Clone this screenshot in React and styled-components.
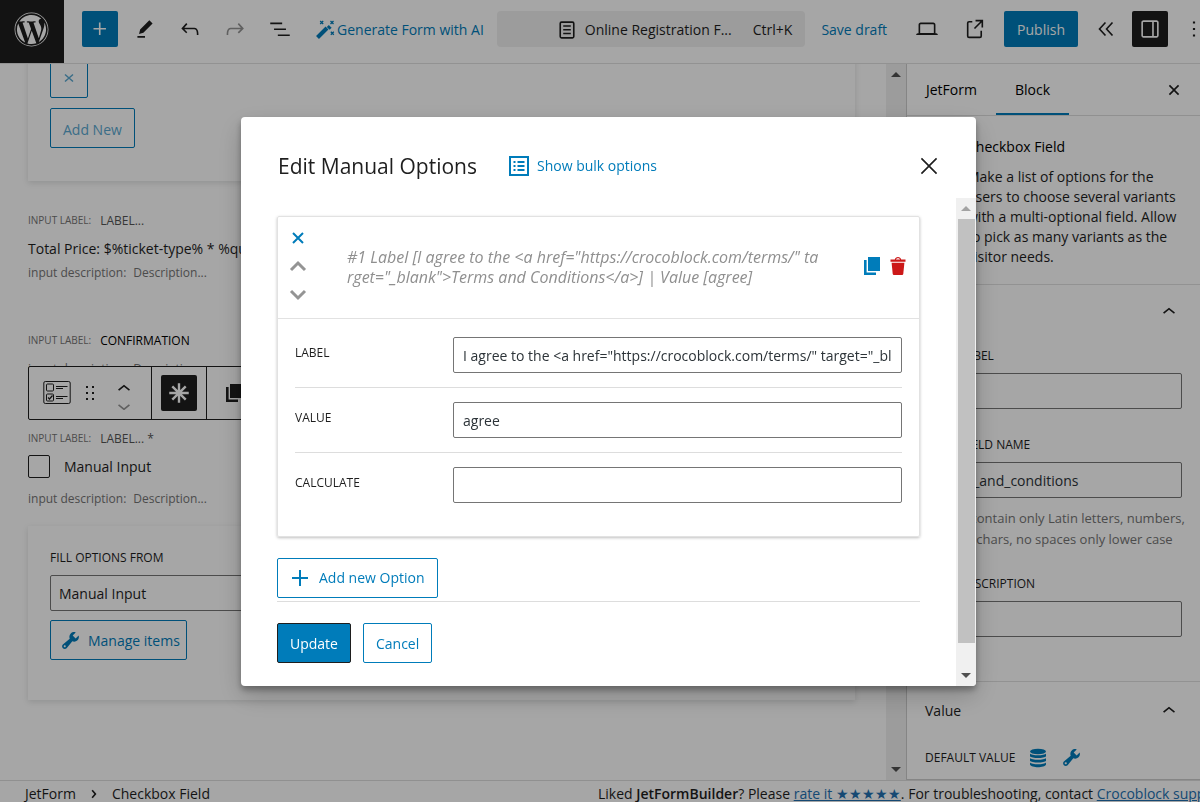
import React from "react";
import styled, { createGlobalStyle, css } from "styled-components";
import { FaWordpress } from "react-icons/fa";

const GlobalStyle = createGlobalStyle`
  * {
    box-sizing: border-box;
  }
  body {
    margin: 0;
    overflow: hidden;
    background: #fff;
    color: #1e1e1e;
    font-family: "Open Sans", "Noto Sans", sans-serif;
    font-size: 14px;
  }
  button,
  input,
  select {
    font: inherit;
    color: inherit;
  }
  button {
    cursor: pointer;
  }
`;

const BLUE = "#007cba";

const Viewport = styled.div`
  height: 100vh;
  overflow: hidden;
`;

const Page = styled.div`
  display: flex;
  flex-direction: column;
  width: calc(100% + 17px);
  height: 100%;
`;

const Svg = styled.svg`
  display: block;
  flex: none;
  fill: ${(p) => (p.$line ? "none" : "currentColor")};
  stroke: ${(p) => (p.$line ? "currentColor" : "none")};
`;

const Icon = ({ d, size = 26, box = 24, line, children }) => (
  <Svg
    width={size}
    height={size}
    viewBox={`0 0 ${box} ${box}`}
    $line={line}
    strokeWidth={line}
    fillRule="evenodd"
    aria-hidden="true"
  >
    {d ? <path d={d} /> : children}
  </Svg>
);

const icons = {
  plus: "M11 12.5V17.5H12.5V12.5H17.5V11H12.5V6H11V11H6V12.5H11Z",
  edit: "m19 7-3-3-8.5 8.5-1 4 4-1L19 7Zm-7 11.5H5V20h7v-1.5Z",
  undo: "M18.3 11.7c-.6-.6-1.4-.9-2.3-.9H6.7l2.9-3.3-1.1-1-4.5 5L8.5 16l1-1-2.7-2.7H16c.5 0 .9.2 1.3.5 1 1 1 3.4 1 4.5v.3h1.5v-.2c0-1.5 0-4.3-1.5-5.7z",
  redo: "M15.6 6.5l-1.1 1 2.9 3.3H8c-.9 0-1.7.3-2.3.9-1.4 1.5-1.4 4.2-1.4 5.6v.2h1.5v-.3c0-1.1 0-3.5 1-4.5.3-.3.7-.5 1.3-.5h9.2L14.5 15l1.1 1.1 4.6-4.6-4.6-5z",
  list: "M3 6h11v1.5H3V6Zm3.5 5.5h11V13h-11v-1.5ZM21 17H10v1.5h11V17Z",
  page: "M15.5 7.5h-7V9h7V7.5Zm-7 3.5h7v1.5h-7V11Zm7 3.5h-7V16h7v-1.5ZM17 4H7a2 2 0 0 0-2 2v12a2 2 0 0 0 2 2h10a2 2 0 0 0 2-2V6a2 2 0 0 0-2-2ZM7 5.5h10a.5.5 0 0 1 .5.5v12a.5.5 0 0 1-.5.5H7a.5.5 0 0 1-.5-.5V6a.5.5 0 0 1 .5-.5Z",
  desktop:
    "M20.5 16h-.7V8c0-1.1-.9-2-2-2H6.2c-1.1 0-2 .9-2 2v8h-.7c-.8 0-1.5.7-1.5 1.5h20c0-.8-.7-1.5-1.5-1.5zM5.7 8c0-.3.2-.5.5-.5h11.6c.3 0 .5.2.5.5v7.6H5.7V8z",
  external:
    "M19.5 3.5h-7V5h4.44l-5.97 5.97 1.06 1.06L18 6.06v4.44h1.5v-7Zm-13 1a2 2 0 0 0-2 2v12a2 2 0 0 0 2 2h10a2 2 0 0 0 2-2v-5H17v5a.5.5 0 0 1-.5.5h-10a.5.5 0 0 1-.5-.5v-12a.5.5 0 0 1 .5-.5h3V4.5h-3Z",
  drawer:
    "M18 4H6c-1.1 0-2 .9-2 2v12c0 1.1.9 2 2 2h12c1.1 0 2-.9 2-2V6c0-1.1-.9-2-2-2zm-4 14.5H6c-.3 0-.5-.2-.5-.5V6c0-.3.2-.5.5-.5h8v13zm4.5-.5c0 .3-.2.5-.5.5h-2.5v-13H18c.3 0 .5.2.5.5v12z",
  more: "M13 19h-2v-2h2v2zm0-6h-2v-2h2v2zm0-6h-2V5h2v2z",
  closeSmall:
    "M12 13.06l3.712 3.713 1.061-1.06L13.061 12l3.712-3.712-1.06-1.06L12 10.938 8.288 7.227l-1.061 1.06L10.939 12l-3.712 3.712 1.06 1.061L12 13.061z",
  close:
    "m13.06 12 6.47-6.47-1.06-1.06L12 10.94 5.53 4.47 4.47 5.53 10.94 12l-6.47 6.47 1.06 1.06L12 13.06l6.47 6.47 1.06-1.06L13.06 12Z",
  up: "M6.5 12.4L12 8l5.5 4.4-.9 1.2L12 10l-4.5 3.6-1-1.2z",
  down: "M17.5 11.6L12 16l-5.5-4.4.9-1.2L12 14l4.5-3.6 1 1.2z",
  next: "M10.8622 8.04053L14.2805 12.0286L10.8622 16.0167L9.72327 15.0405L12.3049 12.0286L9.72327 9.01672L10.8622 8.04053Z",
  drag: "M8 7h2V5H8v2zm0 6h2v-2H8v2zm0 6h2v-2H8v2zm6-14v2h2V5h-2zm0 8h2v-2h-2v2zm0 6h2v-2h-2v2z",
  wrench:
    "M16.68 9.77c-1.34 1.34-3.3 1.67-4.95.99l-5.41 6.52c-.99.99-2.59.99-3.58 0s-.99-2.59 0-3.57l6.52-5.42c-.68-1.65-.35-3.61.99-4.95 1.28-1.28 3.12-1.62 4.72-1.06l-2.89 2.89 2.82 2.82 2.86-2.87c.53 1.58.18 3.39-1.08 4.65zM3.81 16.21c.4.39 1.04.39 1.43 0 .4-.4.4-1.04 0-1.43-.39-.4-1.03-.4-1.43 0-.39.39-.39 1.03 0 1.43z",
  copy: "M6 1h12v14H6zM2 4h2.6v12.4H14V19H2z",
};

const Wand = () => (
  <Icon size={20} box={20} line={1.3}>
    <path d="M1.5 17.5 L11 8" strokeWidth="4" />
    <path d="M12.2 8.4 L14.2 6.4" strokeWidth="4" />
    <path d="M4.2 1l3 3m0-3l-3 3M14.5 1l3 3m0-3l-3 3M14.8 11.8l3 3m0-3l-3 3" />
  </Icon>
);

const Trash = () => (
  <Icon size={20} box={20}>
    <path d="M2.5 3.500h4.300c.3-1.500 1.600-2.500 3.200-2.500s2.900 1 3.200 2.500h4.300v2.200h-15zM8 3.500h4c-.3-.8-1-1.300-2-1.300s-1.700.5-2 1.300z" />
    <path d="M3.600 6.700h12.800l-1.100 11c-.1 .8-.7 1.300-1.500 1.300h-7.600c-.8 0-1.400-.5-1.500-1.300z" />
  </Icon>
);

const Database = () => (
  <Icon size={20} box={20}>
    <ellipse cx="10" cy="3.500" rx="8" ry="2.800" />
    <path d="M2 5.500c1.500 2.400 14.500 2.400 16 0v2.700c-1.500 2.400-14.500 2.400-16 0z" />
    <path d="M2 10c1.500 2.400 14.500 2.400 16 0v2.700c-1.500 2.400-14.500 2.400-16 0z" />
    <path d="M2 14.500c1.500 2.400 14.500 2.400 16 0v2c-1.500 3.600-14.500 3.600-16 0z" />
  </Icon>
);

const BulkIcon = () => (
  <Icon size={22} box={22} line={2}>
    <rect x="2" y="2" width="18" height="18" />
    <path d="M5.500 7h2M9.500 7h7M5.500 11h2M9.500 11h7M5.500 15h2M9.500 15h7" />
  </Icon>
);

const CheckboxBlockIcon = () => (
  <Icon size={28} box={28} line={1}>
    <rect x=".8" y="2.500" width="26.400" height="22" rx="1.500" />
    <rect x="3.500" y="5" width="7" height="7" rx="1" />
    <rect x="3.500" y="15" width="7" height="7" rx="1" />
    <path d="M13 7.500h11.500M13 9.500h7M13 17.500h11.500M13 19.500h7M5 18.500l1.500 1.500 3-3.500" strokeWidth="1.200" />
  </Icon>
);

/* ---------- top bar ---------- */

const TopBar = styled.header`
  display: flex;
  align-items: center;
  flex: none;
  height: 64px;
  border-bottom: 1px solid #e0e0e0;
`;

const Logo = styled.a`
  display: grid;
  place-items: center;
  align-self: stretch;
  width: 64px;
  padding: 0 2px 4px 0;
  margin-right: 18px;
  background: #1e1e1e;
  color: #fff;
`;

const Tools = styled.div`
  display: flex;
  align-items: center;
  gap: 9px;
  padding-bottom: 6px;
`;

const IconButton = styled.button`
  display: grid;
  place-items: center;
  flex: none;
  width: 36px;
  height: 36px;
  padding: 0;
  border: 0;
  border-radius: 2px;
  background: ${(p) => p.$bg || "none"};
  color: ${(p) => p.$color || "#1e1e1e"};
`;

const AiButton = styled.button`
  display: flex;
  align-items: center;
  gap: 1px;
  margin-left: 9px;
  padding: 2px 0 0;
  border: 0;
  background: none;
  color: ${BLUE};
  white-space: nowrap;
`;

const CommandBar = styled.button`
  display: flex;
  align-items: center;
  flex: 1;
  height: 36px;
  margin: 0 16px 6px 13px;
  padding: 2px 13px 0 57px;
  border: 0;
  border-radius: 4px;
  background: #f0f0f0;
  white-space: nowrap;
`;

const CommandTitle = styled.span`
  margin: 0 auto 0 5px;
`;

const Actions = styled.div`
  display: flex;
  align-items: center;
  padding-bottom: 6px;
`;

const TextButton = styled.button`
  padding: 2px 0 0;
  margin-right: 22px;
  border: 0;
  background: none;
  color: ${BLUE};
`;

const ActionGroup = styled.div`
  display: flex;
  gap: 12px;
  margin-right: 11px;
`;

const Publish = styled.button`
  height: 36px;
  margin-right: 10px;
  padding: 2px 13px 0;
  border: 0;
  border-radius: 2px;
  background: ${BLUE};
  color: #fff;
`;

const EndGroup = styled.div`
  display: flex;
  gap: 8px;
  margin-right: 5px;
`;

/* ---------- editor ---------- */

const Main = styled.div`
  display: flex;
  flex: 1;
  min-height: 0;
`;

const Editor = styled.main`
  flex: 1;
  min-width: 0;
  padding: 0 31px 0 28px;
  overflow: hidden;
`;

const Panel = styled.section`
  height: ${(p) => p.$height}px;
  margin-top: ${(p) => p.$top}px;
  padding: ${(p) => p.$pad}px 22px 0;
  background: #fff;
  box-shadow: 0 2px 6px rgba(35, 40, 45, 0.14);
`;

const OutlineButton = styled.button`
  display: flex;
  align-items: center;
  height: 40px;
  gap: ${(p) => p.$gap || 0}px;
  margin-bottom: ${(p) => p.$below || 0}px;
  padding: ${(p) => p.$pad || "2px 12px 0"};
  border: 1px solid ${BLUE};
  border-radius: 2px;
  background: #fff;
  color: ${(p) => (p.$faint ? "#5ba8d0" : BLUE)};
  white-space: nowrap;
  ${(p) =>
    p.$primary &&
    css`
      border-color: #1e1e1e;
      background: ${BLUE};
      color: #fff;
    `}
`;

const Block = styled.section`
  position: relative;
  margin-top: ${(p) => p.$top}px;
`;

const MetaRow = styled.p`
  display: flex;
  align-items: center;
  gap: ${(p) => (p.$desc ? 7 : 9)}px;
  height: 20px;
  margin: 0;
  color: #757575;
  font-size: 12px;
`;

const MetaKey = styled.span`
  font-size: ${(p) => (p.$desc ? 12 : 10)}px;
`;

const MetaLabel = styled.span`
  color: ${(p) => (p.$filled ? "#000" : "#555")};
  font-weight: ${(p) => (p.$filled ? 500 : 400)};
  text-transform: uppercase;
`;

const Price = styled.p`
  height: 20px;
  margin: 9px 0 3px;
  line-height: 20px;
  white-space: nowrap;
`;

const CheckRow = styled.label`
  display: flex;
  align-items: center;
  gap: 14px;
  margin: 7px 0 10px;
`;

const Check = styled.input`
  appearance: none;
  width: 22px;
  height: 23px;
  margin: 0;
  border: 1px solid #1e1e1e;
  border-radius: 2px;
`;

const Toolbar = styled.div`
  position: absolute;
  bottom: calc(100% + 8px);
  left: 0;
  display: flex;
  height: 54px;
  border: 1px solid #1e1e1e;
  border-radius: 2px;
  background: #fff;
`;

const ToolbarGroup = styled.div`
  display: flex;
  align-items: center;
  padding: ${(p) => p.$pad || "0 9px"};
  border-right: 1px solid #1e1e1e;
  &:last-child {
    border-right: 0;
  }
`;

const Movers = styled.div`
  display: flex;
  flex-direction: column;
  margin-left: ${(p) => p.$left}px;
`;

const Mover = styled.button`
  display: grid;
  place-items: center;
  height: 17px;
  padding: 0;
  border: 0;
  background: none;
  color: ${(p) => (p.disabled ? "#949494" : "#1e1e1e")};
  overflow: hidden;
`;

const FieldLabel = styled.label`
  display: block;
  height: 18px;
  line-height: 20px;
  font-size: 12px;
  font-weight: 500;
  text-transform: uppercase;
  white-space: nowrap;
`;

const Select = styled.select`
  appearance: none;
  display: block;
  width: 100%;
  height: 36px;
  margin: 9px 0;
  padding: 0 8px;
  border: 1px solid #757575;
  border-radius: 2px;
  background: #fff;
`;

/* ---------- scrollbars ---------- */

const Track = styled.div`
  display: flex;
  flex-direction: column;
  align-items: center;
  flex: none;
  width: 20px;
  padding: 8px 0;
  background: #f0f0f0;
`;

const Arrow = styled.span`
  border: 5px solid transparent;
  border-top-width: 0;
  border-bottom: 5px solid ${(p) => p.$color};
  ${(p) =>
    p.$down &&
    css`
      border-top: 5px solid ${p.$color};
      border-bottom-width: 0;
    `}
`;

const Thumb = styled.span`
  flex: 1;
  width: 17px;
  margin: 8px 0 30px;
  background: ${(p) => (p.$hidden ? "none" : "#c1c1c1")};
`;

const Scrollbar = ({ empty }) => (
  <Track aria-hidden="true">
    <Arrow $color={empty ? "#505050" : "#a3a3a3"} />
    <Thumb $hidden={empty} />
    <Arrow $down $color="#505050" />
  </Track>
);

/* ---------- sidebar ---------- */

const Sidebar = styled.aside`
  flex: none;
  width: 311px;
  padding-right: 17px;
  border-left: 1px solid #ccc;
  border-bottom: 1px solid #ccc;
  overflow: hidden;
`;

const Tabs = styled.div`
  display: flex;
  height: 52px;
  margin-right: -17px;
  padding-right: 29px;
  border-bottom: 1px solid #ddd;
`;

const Tab = styled.button`
  padding: 2px 19px 0;
  border: 0;
  border-bottom: 2px solid ${(p) => (p.$active ? BLUE : "transparent")};
  background: none;
  color: #000;
  font-weight: 500;
`;

const TabClose = styled(IconButton)`
  align-self: center;
  width: 28px;
  margin-left: auto;
`;

const BlockCard = styled.div`
  display: flex;
  gap: 14px;
  height: 169px;
  padding: 20px 18px 0;
  border-bottom: 1px solid #e0e0e0;
  margin-right: -17px;
`;

const BlockTitle = styled.h2`
  margin: 0 0 9px;
  color: #000;
  font-size: 14px;
  font-weight: 500;
  line-height: 22px;
`;

const BlockText = styled.p`
  margin: 0;
  line-height: 20px;
  white-space: pre-line;
`;

const PanelHead = styled.button`
  display: flex;
  align-items: center;
  justify-content: space-between;
  width: 100%;
  height: 54px;
  padding: 0 18px;
  border: 0;
  background: none;
  font-weight: 500;
`;

const Section = styled.div`
  padding: 7px 18px 0;
  & + button {
    border-top: 1px solid #e0e0e0;
    height: 58px;
  }
`;

const Field = styled.div`
  height: ${(p) => p.$height}px;
`;

const TextInput = styled.input`
  display: block;
  width: 100%;
  height: 36px;
  padding: 2px 9px 0;
  border: 1px solid #757575;
  border-radius: 2px;
  background: #fff;
  color: #2c3338;
`;

const SideInput = styled(TextInput)`
  margin: 9px 0;
  padding-top: 0;
`;

const Help = styled.p`
  margin: 0;
  padding-top: 1px;
  color: #757575;
  font-size: 13px;
  line-height: 21px;
  white-space: pre;
`;

const DefaultRow = styled.div`
  display: flex;
  align-items: center;
  gap: 13px;
  padding: 8px 18px;
  color: ${BLUE};
`;

const DefaultLabel = styled.span`
  color: #1e1e1e;
  font-size: 12px;
  font-weight: 500;
`;

/* ---------- footer ---------- */

const Footer = styled.footer`
  display: flex;
  justify-content: space-between;
  flex: none;
  height: 22px;
  padding: 5px 0 0 25px;
  border-top: 1px solid #ddd;
  line-height: 16px;
  white-space: nowrap;
`;

const Crumbs = styled.nav`
  display: flex;
  align-items: center;
  gap: 5px;
  height: 16px;
`;

const FooterLink = styled.a`
  color: #2271b1;
`;

const Rate = styled.div`
  flex: none;
  width: 619px;
`;

const Product = styled.strong`
  font-weight: 600;
`;

/* ---------- modal ---------- */

const Overlay = styled.div`
  position: fixed;
  inset: 0 -17px 0 0;
  display: grid;
  place-items: center;
  background: rgba(0, 0, 0, 0.35);
`;

const Modal = styled.div`
  width: 735px;
  max-width: 90%;
  border-radius: 4px;
  background: #fff;
  overflow: hidden;
  box-shadow: 0 4px 6px rgba(0, 0, 0, 0.3), 0 10px 26px rgba(0, 0, 0, 0.2);
`;

const ModalHead = styled.div`
  display: flex;
  align-items: center;
  height: 81px;
  padding: 17px 34px 0 37px;
`;

const ModalTitle = styled.h1`
  margin: 0 31px 0 0;
  font-size: 21px;
  font-weight: 500;
`;

const BulkButton = styled(AiButton)`
  gap: 7px;
  margin: 0 auto 0 0;
  padding: 0;
`;

const ModalClose = styled(IconButton)`
  width: 26px;
`;

const ModalBody = styled.div`
  display: flex;
`;

const ModalContent = styled.div`
  flex: 1;
  min-width: 0;
  padding: 18px 36px 23px;
`;

const Card = styled.div`
  margin-bottom: 21px;
  border: 1px solid #e2e2e2;
  border-radius: 2px;
  box-shadow: 0 1px 3px rgba(0, 0, 0, 0.25);
`;

const CardHead = styled.div`
  display: flex;
  align-items: center;
  height: 102px;
  padding: 0 8px;
  border-bottom: 1px solid #e2e2e2;
`;

const Order = styled.div`
  display: flex;
  flex-direction: column;
  padding-bottom: 3px;
`;

const OrderButton = styled(IconButton)`
  width: 24px;
  height: 28px;
  color: ${(p) => p.$color || "#949494"};
`;

const Summary = styled.p`
  flex: 1;
  margin: 0 38px 0 37px;
  color: #8f8f8f;
  font-size: 16px;
  font-style: italic;
  line-height: 20px;
  word-break: break-all;
`;

const CardTools = styled.div`
  display: flex;
  padding-bottom: 3px;
`;

const CardTool = styled(IconButton)`
  width: 26px;
`;

const CardBody = styled.div`
  padding: 4px 17px 19px;
`;

const Row = styled.div`
  display: flex;
  padding: 14px 0;
  border-bottom: 1px solid #ddd;
  &:last-child {
    border-bottom: 0;
  }
`;

const RowLabel = styled(FieldLabel)`
  flex: none;
  width: 158px;
  margin-top: 6px;
  font-weight: 400;
`;

const Buttons = styled.div`
  display: flex;
  gap: 12px;
  margin-top: 3px;
  padding-top: 21px;
  border-top: 1px solid #ddd;
`;

const InputLabel = ({ children, filled }) => (
  <MetaRow>
    <MetaKey>INPUT LABEL:</MetaKey>
    <MetaLabel $filled={filled}>{children}</MetaLabel>
  </MetaRow>
);

const InputDescription = () => (
  <MetaRow $desc>
    <MetaKey $desc>input description:</MetaKey>
    <span>Description...</span>
  </MetaRow>
);

const rows = [
  {
    id: "label",
    name: "Label",
    value:
      'I agree to the <a href="https://crocoblock.com/terms/" target="_blank">Terms and Conditions</a>',
  },
  { id: "value", name: "Value", value: "agree" },
  { id: "calculate", name: "Calculate", value: "" },
];

const Header = () => (
  <TopBar>
    <Logo href="#" aria-label="View forms">
      <FaWordpress size={35} />
    </Logo>
    <Tools>
      <IconButton $bg={BLUE} $color="#fff" aria-label="Add block">
        <Icon d={icons.plus} />
      </IconButton>
      <IconButton aria-label="Tools">
        <Icon d={icons.edit} />
      </IconButton>
      <IconButton aria-label="Undo">
        <Icon d={icons.undo} />
      </IconButton>
      <IconButton $color="#949494" aria-label="Redo">
        <Icon d={icons.redo} />
      </IconButton>
      <IconButton aria-label="Document overview">
        <Icon d={icons.list} />
      </IconButton>
      <AiButton>
        <Wand />
        Generate Form with AI
      </AiButton>
    </Tools>
    <CommandBar>
      <Icon d={icons.page} />
      <CommandTitle>Online Registration F...</CommandTitle>
      <span>Ctrl+K</span>
    </CommandBar>
    <Actions>
      <TextButton>Save draft</TextButton>
      <ActionGroup>
        <IconButton aria-label="Preview">
          <Icon d={icons.desktop} />
        </IconButton>
        <IconButton aria-label="View form">
          <Icon d={icons.external} />
        </IconButton>
      </ActionGroup>
      <Publish>Publish</Publish>
      <EndGroup>
        <IconButton aria-label="Collapse">
          <Icon line={1.5}>
            <path d="M11.500 6l-5.500 6 5.500 6M18 6l-5.500 6 5.500 6" />
          </Icon>
        </IconButton>
        <IconButton $bg="#1e1e1e" $color="#fff" aria-label="Settings">
          <Icon d={icons.drawer} />
        </IconButton>
        <IconButton aria-label="Options">
          <Icon d={icons.more} />
        </IconButton>
      </EndGroup>
    </Actions>
  </TopBar>
);

const Canvas = () => (
  <Editor>
    <Panel $top={-20} $height={137} $pad={14}>
      <OutlineButton $below={10} $pad="0 12px" $faint aria-label="Remove">
        <Icon size={12} line={3}>
          <path d="M4 5l16 14M20 5L4 19" />
        </Icon>
      </OutlineButton>
      <OutlineButton $faint>Add New</OutlineButton>
    </Panel>
    <Block $top={29}>
      <InputLabel>Label...</InputLabel>
      <Price>Total Price: $%ticket-type% * %quantity%</Price>
      <InputDescription />
    </Block>
    <Block $top={48}>
      <InputLabel filled>Confirmation</InputLabel>
      <Block $top={8}>
        <InputDescription />
      </Block>
    </Block>
    <Block $top={50}>
      <Toolbar>
        <ToolbarGroup $pad="0 14px">
          <CheckboxBlockIcon />
          <Movers $left={7}>
            <Icon d={icons.drag} size={24} />
          </Movers>
          <Movers $left={9}>
            <Mover aria-label="Move up">
              <Icon d={icons.up} />
            </Mover>
            <Mover disabled aria-label="Move down">
              <Icon d={icons.down} />
            </Mover>
          </Movers>
        </ToolbarGroup>
        <ToolbarGroup>
          <IconButton $bg="#1e1e1e" $color="#fff" aria-label="Required">
            <Icon line={2.2}>
              <path d="M12 3v18M3 12h18M5.800 5.800l12.400 12.400M18.200 5.800L5.800 18.200" />
            </Icon>
          </IconButton>
        </ToolbarGroup>
        <ToolbarGroup $pad="0 17px">
          <Icon d={icons.copy} size={20} box={20} />
        </ToolbarGroup>
      </Toolbar>
      <InputLabel>Label... *</InputLabel>
      <CheckRow>
        <Check type="checkbox" />
        Manual Input
      </CheckRow>
      <InputDescription />
    </Block>
    <Panel $top={18} $height={174} $pad={22}>
      <FieldLabel htmlFor="fill">Fill options from</FieldLabel>
      <Select id="fill">
        <option>Manual Input</option>
      </Select>
      <OutlineButton $pad="0 6px 0 9px" $gap={7}>
        <Icon d={icons.wrench} size={21} box={20} />
        Manage items
      </OutlineButton>
    </Panel>
  </Editor>
);

const Settings = () => (
  <Sidebar>
    <Tabs>
      <Tab>JetForm</Tab>
      <Tab $active>Block</Tab>
      <TabClose aria-label="Close settings">
        <Icon d={icons.closeSmall} />
      </TabClose>
    </Tabs>
    <BlockCard>
      <CheckboxBlockIcon />
      <div>
        <BlockTitle>Checkbox Field</BlockTitle>
        <BlockText>
          {
            "Make a list of options for the\nusers to choose several variants\nwith a multi-optional field. Allow\nto pick as many variants as the\nvisitor needs."
          }
        </BlockText>
      </div>
    </BlockCard>
    <PanelHead>
      General
      <Icon d={icons.up} />
    </PanelHead>
    <Section>
      <Field $height={89}>
        <FieldLabel htmlFor="f-label">Field label</FieldLabel>
        <SideInput id="f-label" />
      </Field>
      <Field $height={139}>
        <FieldLabel htmlFor="f-name">Form field name</FieldLabel>
        <SideInput id="f-name" defaultValue="terms_and_conditions" />
        <Help>
          {
            "Should contain only Latin letters, numbers,\n“-” or “_” chars, no spaces only lower case"
          }
        </Help>
      </Field>
      <Field $height={107}>
        <FieldLabel htmlFor="f-desc">Field description</FieldLabel>
        <SideInput id="f-desc" />
      </Field>
    </Section>
    <PanelHead>
      Value
      <Icon d={icons.up} />
    </PanelHead>
    <DefaultRow>
      <DefaultLabel>DEFAULT VALUE</DefaultLabel>
      <Database />
      <Icon d={icons.wrench} size={21} box={20} />
    </DefaultRow>
  </Sidebar>
);

const OptionsModal = () => (
  <Overlay>
    <Modal role="dialog" aria-labelledby="modal-title">
      <ModalHead>
        <ModalTitle id="modal-title">Edit Manual Options</ModalTitle>
        <BulkButton>
          <BulkIcon />
          Show bulk options
        </BulkButton>
        <ModalClose aria-label="Close">
          <Icon d={icons.close} />
        </ModalClose>
      </ModalHead>
      <ModalBody>
        <ModalContent>
          <Card>
            <CardHead>
              <Order>
                <OrderButton $color={BLUE} aria-label="Collapse option">
                  <Icon size={12} line={4}>
                    <path d="M2 2l20 20M22 2L2 22" />
                  </Icon>
                </OrderButton>
                <OrderButton aria-label="Move option up">
                  <Icon size={18} box={18} line={3}>
                    <path d="M2 13l7-7 7 7" />
                  </Icon>
                </OrderButton>
                <OrderButton aria-label="Move option down">
                  <Icon size={18} box={18} line={3}>
                    <path d="M2 6l7 7 7-7" />
                  </Icon>
                </OrderButton>
              </Order>
              <Summary>
                {`#1 Label [${rows[0].value}] | Value [${rows[1].value}]`}
              </Summary>
              <CardTools>
                <CardTool $color={BLUE} aria-label="Duplicate">
                  <Icon d={icons.copy} size={20} box={20} />
                </CardTool>
                <CardTool $color="#cc1818" aria-label="Delete">
                  <Trash />
                </CardTool>
              </CardTools>
            </CardHead>
            <CardBody>
              {rows.map((row) => (
                <Row key={row.id}>
                  <RowLabel htmlFor={row.id}>{row.name}</RowLabel>
                  <TextInput id={row.id} defaultValue={row.value} />
                </Row>
              ))}
            </CardBody>
          </Card>
          <OutlineButton $gap={9} $pad="0 12px">
            <Icon size={20} box={20} line={2}>
              <path d="M10 2v16M2 10h16" />
            </Icon>
            Add new Option
          </OutlineButton>
          <Buttons>
            <OutlineButton $primary>Update</OutlineButton>
            <OutlineButton>Cancel</OutlineButton>
          </Buttons>
        </ModalContent>
        <Scrollbar />
      </ModalBody>
    </Modal>
  </Overlay>
);

const App = () => (
  <Viewport>
    <GlobalStyle />
    <Page>
      <Header />
      <Main>
        <Canvas />
        <Scrollbar empty />
        <Settings />
      </Main>
      <Footer>
        <Crumbs>
          JetForm
          <Icon d={icons.next} />
          Checkbox Field
        </Crumbs>
        <Rate>
          Liked <Product>JetFormBuilder</Product>? Please{" "}
          <FooterLink href="#">rate it ★★★★★</FooterLink>. For troubleshooting,
          contact <FooterLink href="#">Crocoblock support</FooterLink>.
        </Rate>
      </Footer>
    </Page>
    <OptionsModal />
  </Viewport>
);

export default App;
